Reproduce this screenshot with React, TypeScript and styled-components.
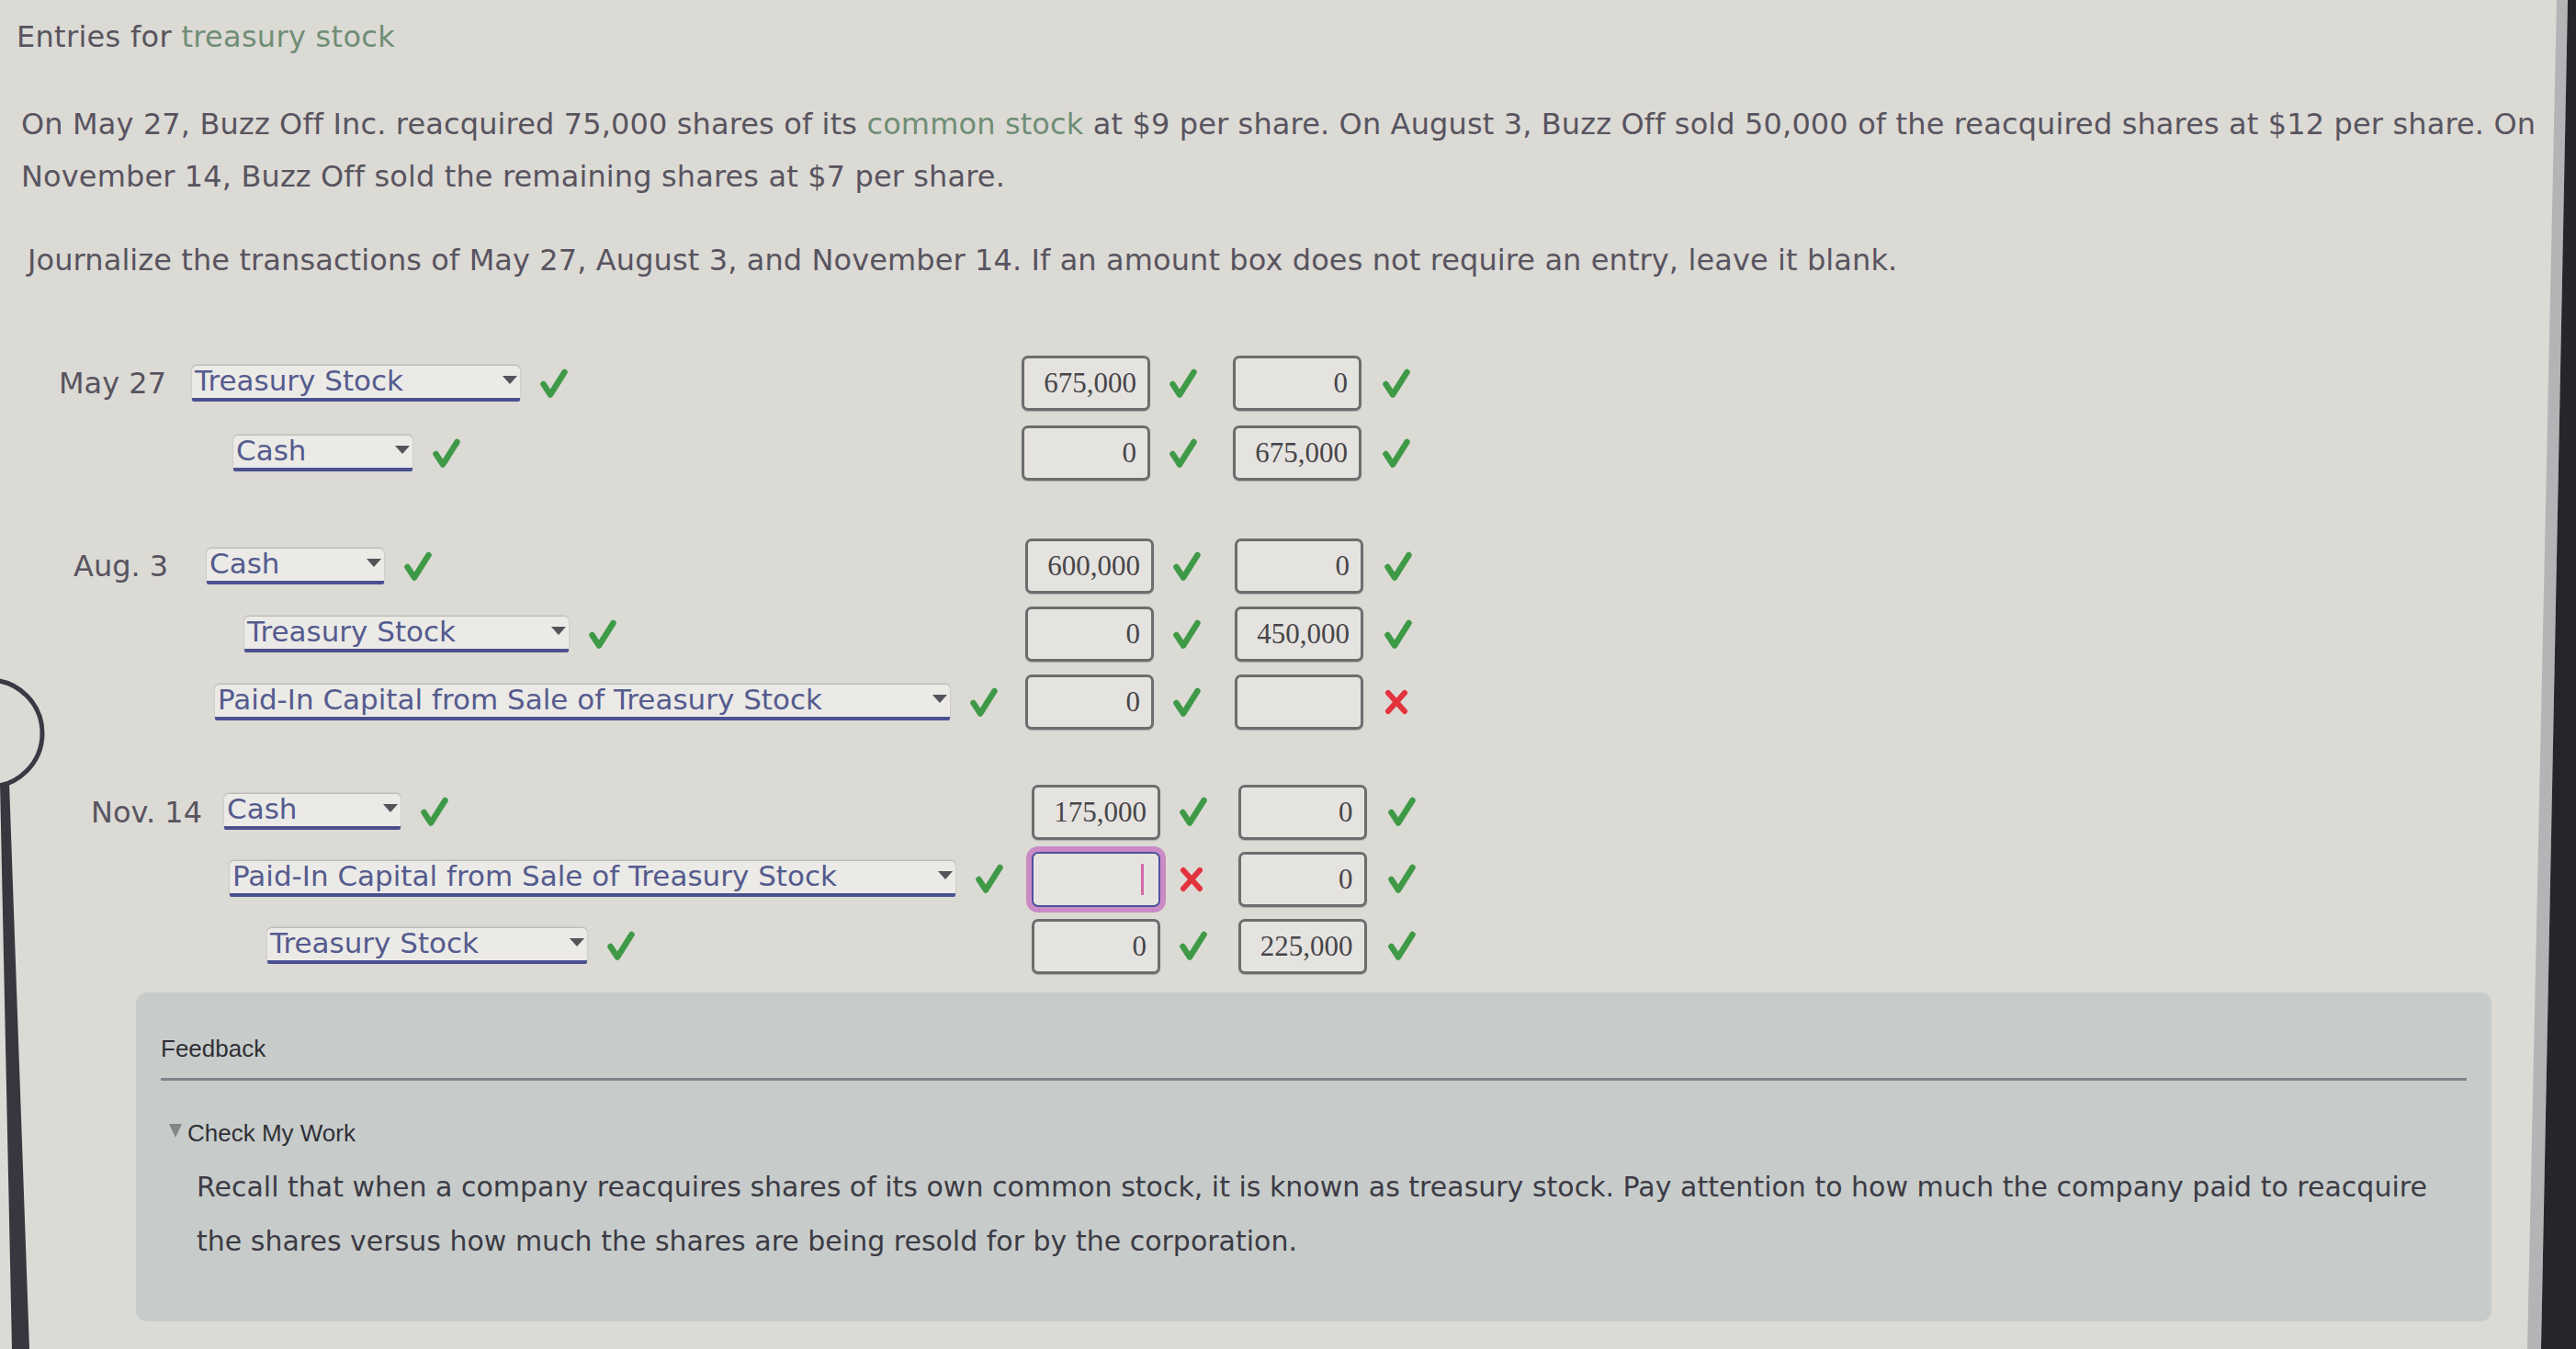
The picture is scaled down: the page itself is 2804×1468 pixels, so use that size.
import React from "react"
import styled, { createGlobalStyle } from "styled-components"

const GlobalStyle = createGlobalStyle`
    html, body {
        margin: 0;
        padding: 0;
    }
    body {
        background: #dcdad5;
        font-family: "DejaVu Sans", Verdana, sans-serif;
    }
`

const Screen = styled.div`
    width: 2804px;
    height: 1468px;
    position: relative;
    overflow: hidden;
    background: #dcdad5;
`
const Page = styled.div`
    display: flex;
    flex-direction: column;
    color: #58545f;
`
const Title = styled.h1`
    margin: 20px 0 0 18px;
    font-size: 32px;
    font-weight: normal;
    line-height: 40px;
    letter-spacing: 0.3px;
`
const Term = styled.span`
    color: #6f8e75;
`
const Prompt = styled.p`
    margin: 47px 0 0 23px;
    width: 2745px;
    font-size: 32px;
    line-height: 57px;
    letter-spacing: 0.13px;
`
const Instruction = styled.p`
    margin: 34px 0 0 30px;
    font-size: 32px;
    line-height: 57px;
    letter-spacing: 0.1px;
`
const Journal = styled.div`
    margin-top: 67px;
    display: flex;
    flex-direction: column;
`
const Entry = styled.div<{ $top: number }>`
    display: flex;
    flex-direction: column;
    margin-top: ${({ $top }) => $top}px;
`
const Line = styled.div<{ $drift: number; $h: number }>`
    display: grid;
    grid-template-columns: ${({ $drift }) => `${1112 + $drift}px 140px ${90 - $drift / 2}px 140px 1fr`};
    align-items: center;
    height: ${({ $h }) => $h}px;
`
const AccountCell = styled.div<{ $shift: number }>`
    display: flex;
    align-items: center;
    padding-left: ${({ $shift }) => $shift}px;
`
const DateLabel = styled.div`
    width: 145px;
    flex: none;
    font-size: 32px;
    line-height: 40px;
`
const Select = styled.div<{ $w: number; $indent: number }>`
    width: ${({ $w }) => $w}px;
    margin-left: ${({ $indent }) => $indent}px;
    height: 39px;
    box-sizing: border-box;
    flex: none;
    display: flex;
    align-items: flex-end;
    justify-content: space-between;
    padding: 0 3px 3px 3px;
    background: #ebeae7;
    border-radius: 5px 5px 2px 2px;
    border-bottom: 4px solid #4b5190;
    box-shadow: 0 -1px 2px rgba(0, 0, 0, 0.2);
    color: #555b8e;
    font-size: 31px;
    line-height: 31px;
    white-space: nowrap;
`
const Arrow = styled.span`
    width: 0;
    height: 0;
    margin-bottom: 12px;
    border-left: 8px solid transparent;
    border-right: 8px solid transparent;
    border-top: 9px solid #54535a;
`
const MarkSlot = styled.span<{ $gap: number }>`
    display: inline-flex;
    justify-self: start;
    margin-left: ${({ $gap }) => $gap}px;
`
const AmountBox = styled.div<{ $focus?: boolean }>`
    height: 60px;
    box-sizing: border-box;
    display: flex;
    align-items: center;
    justify-content: flex-end;
    padding-right: 12px;
    border: ${({ $focus }) => ($focus ? "2px solid #4f519c" : "3px solid #6d6c6e")};
    border-radius: 7px;
    background: #e5e3df;
    box-shadow: ${({ $focus }) => ($focus ? "0 0 0 6px #c98ac6" : "0 1px 1px rgba(0,0,0,0.2)")};
    font-family: "Liberation Serif", "Times New Roman", serif;
    font-size: 31px;
    color: #474549;
`
const Caret = styled.span`
    width: 3px;
    height: 34px;
    margin-right: 4px;
    background: #d46aa9;
`
const FeedbackPanel = styled.section`
    margin: 14px 0 0 148px;
    width: 2564px;
    height: 358px;
    box-sizing: border-box;
    padding: 46px 27px 0;
    background: #c7cccb;
    border-radius: 12px;
    font-family: "Liberation Sans", Arial, sans-serif;
    color: #2f2f35;
`
const FeedbackTitle = styled.div`
    font-size: 26px;
    line-height: 30px;
`
const Rule = styled.div`
    margin-top: 17px;
    height: 3px;
    background: #80848a;
`
const CheckHead = styled.div`
    margin: 42px 0 0 9px;
    display: flex;
    align-items: center;
    gap: 6px;
    font-size: 26px;
    line-height: 30px;
`
const Disclosure = styled.span`
    width: 0;
    height: 0;
    margin-top: -6px;
    border-left: 7px solid transparent;
    border-right: 7px solid transparent;
    border-top: 15px solid #85858a;
`
const Recall = styled.p`
    margin: 14px 0 0 39px;
    font-family: "DejaVu Sans", Verdana, sans-serif;
    font-size: 30px;
    line-height: 59px;
    color: #3c3b44;
`
const Overlay = styled.svg<{ $side: "left" | "right" }>`
    position: absolute;
    top: 0;
    ${({ $side }) => ($side === "left" ? "left: 0;" : "right: 0;")}
    pointer-events: none;
`

const Tick = () => (
    <svg width="30" height="33" viewBox="0 0 30 33">
        <path d="M3.5 17 L11 28.5 L26.5 4" fill="none" stroke="#3e9a47" strokeWidth="6.5" strokeLinecap="round" strokeLinejoin="round" />
    </svg>
)
const Cross = () => (
    <svg width="26" height="28" viewBox="0 0 26 28">
        <path d="M4 4 L22 24 M22 4 L4 24" fill="none" stroke="#e3333e" strokeWidth="6" strokeLinecap="round" />
    </svg>
)

type Row = {
    account: string
    width: number
    indent: number
    accountOk: boolean
    debit: string
    debitOk: boolean
    credit: string
    creditOk: boolean
    focus?: boolean
}
type JournalEntry = { date: string; top: number; rowH: number; shift: number; drift: number; rows: Row[] }

const entries: JournalEntry[] = [
    {
        date: "May 27",
        top: 0,
        rowH: 76,
        shift: 64,
        drift: 0,
        rows: [
            { account: "Treasury Stock", width: 357, indent: 0, accountOk: true, debit: "675,000", debitOk: true, credit: "0", creditOk: true },
            { account: "Cash", width: 195, indent: 45, accountOk: true, debit: "0", debitOk: true, credit: "675,000", creditOk: true },
        ],
    },
    {
        date: "Aug. 3",
        top: 48,
        rowH: 74,
        shift: 80,
        drift: 4,
        rows: [
            { account: "Cash", width: 193, indent: 0, accountOk: true, debit: "600,000", debitOk: true, credit: "0", creditOk: true },
            { account: "Treasury Stock", width: 353, indent: 41, accountOk: true, debit: "0", debitOk: true, credit: "450,000", creditOk: true },
            { account: "Paid-In Capital from Sale of Treasury Stock", width: 800, indent: 9, accountOk: true, debit: "0", debitOk: true, credit: "", creditOk: false },
        ],
    },
    {
        date: "Nov. 14",
        top: 46,
        rowH: 73,
        shift: 99,
        drift: 11,
        rows: [
            { account: "Cash", width: 192, indent: 0, accountOk: true, debit: "175,000", debitOk: true, credit: "0", creditOk: true },
            { account: "Paid-In Capital from Sale of Treasury Stock", width: 790, indent: 6, accountOk: true, debit: "", debitOk: false, credit: "0", creditOk: true, focus: true },
            { account: "Treasury Stock", width: 348, indent: 47, accountOk: true, debit: "0", debitOk: true, credit: "225,000", creditOk: true },
        ],
    },
]

function App() {
    return (
        <Screen>
            <GlobalStyle />
            <Page>
                <Title>
                    Entries for <Term>treasury stock</Term>
                </Title>
                <Prompt>
                    On May 27, Buzz Off Inc. reacquired 75,000 shares of its <Term>common stock</Term> at $9 per share. On August 3, Buzz Off sold 50,000 of the reacquired shares at $12 per share. On November 14, Buzz Off sold the remaining shares at $7 per share.
                </Prompt>
                <Instruction>
                    Journalize the transactions of May 27, August 3, and November 14. If an amount box does not require an entry, leave it blank.
                </Instruction>

                <Journal>
                    {entries.map((entry) => (
                        <Entry key={entry.date} $top={entry.top}>
                            {entry.rows.map((row, i) => (
                                <Line key={i} $drift={entry.drift} $h={entry.rowH}>
                                    <AccountCell $shift={entry.shift}>
                                        <DateLabel>{i === 0 ? entry.date : ""}</DateLabel>
                                        <Select $w={row.width} $indent={row.indent}>
                                            <span>{row.account}</span>
                                            <Arrow />
                                        </Select>
                                        <MarkSlot $gap={22}>{row.accountOk ? <Tick /> : <Cross />}</MarkSlot>
                                    </AccountCell>
                                    <AmountBox $focus={row.focus}>
                                        {row.focus ? <Caret /> : row.debit}
                                    </AmountBox>
                                    <MarkSlot $gap={21}>{row.debitOk ? <Tick /> : <Cross />}</MarkSlot>
                                    <AmountBox>{row.credit}</AmountBox>
                                    <MarkSlot $gap={23}>{row.creditOk ? <Tick /> : <Cross />}</MarkSlot>
                                </Line>
                            ))}
                        </Entry>
                    ))}
                </Journal>

                <FeedbackPanel>
                    <FeedbackTitle>Feedback</FeedbackTitle>
                    <Rule />
                    <CheckHead>
                        <Disclosure />
                        Check My Work
                    </CheckHead>
                    <Recall>
                        Recall that when a company reacquires shares of its own common stock, it is known as treasury stock. Pay attention to how much the company paid to reacquire the shares versus how much the shares are being resold for by the corporation.
                    </Recall>
                </FeedbackPanel>
            </Page>

            {/* photo edges: bezel strip on the left with the round button, frame on the right */}
            <Overlay $side="left" width="80" height="1468" viewBox="0 0 80 1468">
                <circle cx="-12" cy="798" r="58" fill="none" stroke="#3b3944" strokeWidth="5" />
                <polygon points="0,852 10,852 32,1468 13,1468" fill="#38363e" />
            </Overlay>
            <Overlay $side="right" width="80" height="1468" viewBox="0 0 80 1468">
                <polygon points="59,0 71,0 42,1468 27,1468" fill="#b4b4b6" />
                <polygon points="71,0 80,0 80,1468 42,1468" fill="#26252a" />
            </Overlay>
        </Screen>
    )
}

export default App
